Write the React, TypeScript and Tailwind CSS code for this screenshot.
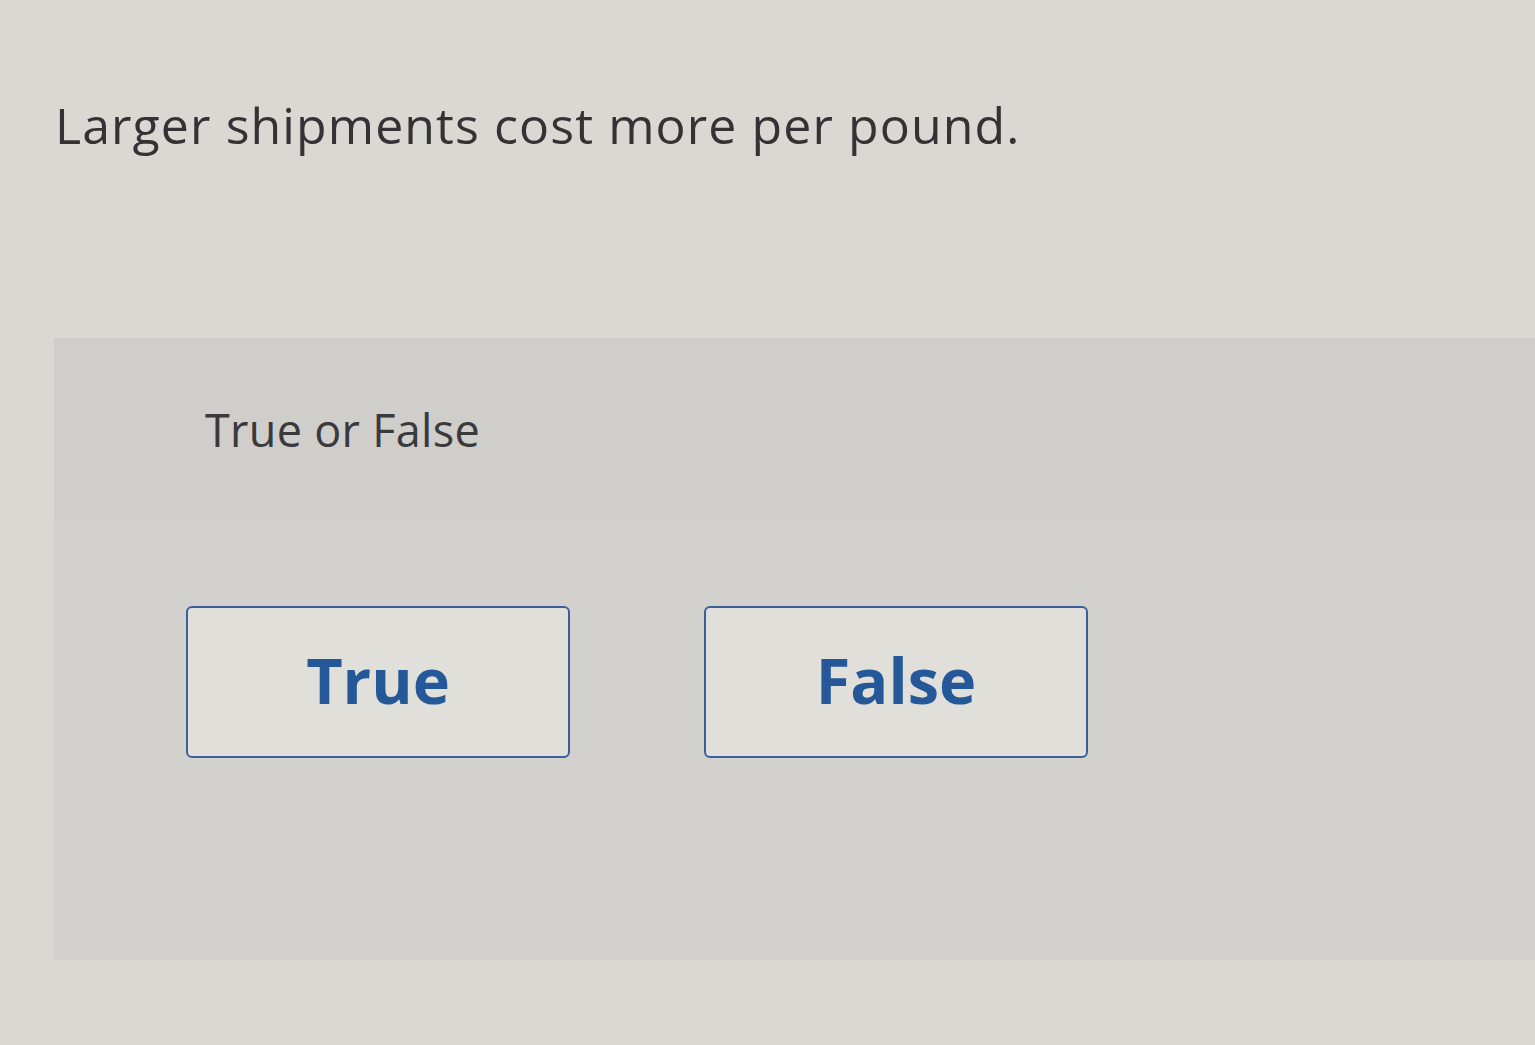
export default function App() {
  const options = ['True', 'False']

  return (
    <div
      className="min-h-[1045px] w-full overflow-hidden bg-[#d9d8d3] pt-[89px] text-[#2c2c2e]"
      style={{ fontFamily: '"Open Sans", "Liberation Sans", sans-serif' }}
    >
      <h1 className="pl-[55px] text-[50px] font-normal leading-[72px] tracking-[1.1px] text-[#333335]">
        Larger shipments cost more per pound.
      </h1>

      {/* Question card */}
      <div className="ml-[54px] mt-[177px] h-[622px] bg-[#d2d1cd]">
        <div className="flex h-[182px] items-start bg-[#cfcecb] pl-[151px] pt-[62px]">
          <span className="text-[45px] leading-[60px] tracking-[0.3px] text-[#3a3a3c]">True or False</span>
        </div>

        <div className="flex gap-[134px] pl-[132px] pt-[86px]">
          {options.map((opt) => (
            <button
              key={opt}
              className="flex h-[152px] w-[384px] items-center justify-center rounded-[6px] border-[2.5px] border-[#3a5f9a] bg-[#e0dfda] pb-[4px] text-[63px] font-bold text-[#245898]"
            >
              {opt}
            </button>
          ))}
        </div>
      </div>
    </div>
  )
}
